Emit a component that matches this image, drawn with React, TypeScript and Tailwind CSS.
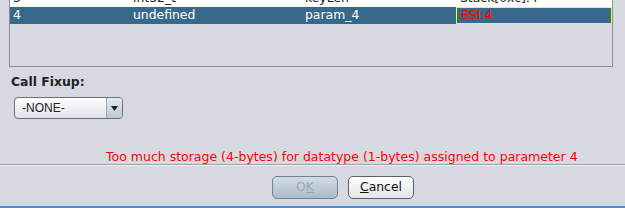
import React from 'react';

const font = { fontFamily: '"DejaVu Sans", Verdana, sans-serif' };

function Row({ cells, selected }: { cells: string[]; selected?: boolean }) {
  const widths = ['w-[120px]', 'w-[172px]', 'w-[154px]'];
  return (
    <div className={`flex h-[17px] items-center text-[12.4px] ${selected ? 'bg-[#39698a] text-white' : 'bg-white text-[#222]'}`}>
      {cells.slice(0, 3).map((c, i) => (
        <div key={i} className={`${widths[i]} pl-[3px] whitespace-nowrap`}>{c}</div>
      ))}
      <div
        className={`flex-1 h-full flex items-center pl-[4px] whitespace-nowrap ${
          selected ? 'border border-[#ffff00] text-[#ff0000]' : ''
        }`}
      >
        {cells[3]}
      </div>
    </div>
  );
}

export default function App() {
  return (
    <div className="w-[625px] h-[208px] bg-[#d6d9df] flex flex-col overflow-hidden" style={font}>
      {/* Parameter table (scrolled) */}
      <div className="ml-[9px] w-[604px] h-[67px] border-x border-b border-[#8e9095] overflow-hidden">
        <div className="-mt-[10px]">
          <Row cells={['3', 'int32_t', 'keyLen', 'Stack[0xc]:4']} />
          <Row cells={['4', 'undefined', 'param_4', 'ESI:4']} selected />
        </div>
      </div>

      {/* Call fixup */}
      <div className="mt-[7px] ml-[11px] text-[12.4px] font-bold text-[#222] leading-[16px]">Call Fixup:</div>
      <div className="mt-[7px] ml-[14px] w-[109px] h-[22px] flex rounded-[4px] border border-[#6d7178] bg-gradient-to-b from-white to-[#dfe2e7] overflow-hidden">
        <div className="flex-1 flex items-center pl-[7px] text-[12px] text-[#222]" style={{ fontFamily: '"Liberation Sans", Arial, sans-serif' }}>
          -NONE-
        </div>
        <div className="w-[16px] flex items-center justify-center border-l border-[#9aa6b4] bg-gradient-to-b from-[#e4ebf2] to-[#b9c8d8]">
          <svg width="7" height="5" viewBox="0 0 7 5">
            <path d="M0 0 H7 L3.5 5 Z" fill="#222" />
          </svg>
        </div>
      </div>

      {/* Error message */}
      <div className="mt-[31px] ml-[106px] text-[12.5px] leading-[14px] text-[#ff0000] whitespace-nowrap">
        Too much storage (4-bytes) for datatype (1-bytes) assigned to parameter 4
      </div>
      <div className="h-[2px] border-t border-[#9ea1a6] border-b border-b-[#eef0f3]" />

      {/* Buttons */}
      <div className="mt-[10px] ml-[272px] flex gap-[10px]">
        <button
          disabled
          className="w-[66px] h-[23px] rounded-[5px] border border-[#6f8196] bg-gradient-to-b from-[#d3dce5] to-[#a9bccd] text-[12.4px] text-[#9aa8b5]"
          style={font}
        >
          O<span className="underline">K</span>
        </button>
        <button
          className="w-[66px] h-[23px] rounded-[5px] border border-[#5c5f63] bg-gradient-to-b from-white to-[#e3e5e8] text-[12.4px] text-[#111]"
          style={font}
        >
          <span className="underline">C</span>ancel
        </button>
      </div>

      <div className="mt-auto h-[2px] bg-[#4a8ed8]" />
    </div>
  );
}
